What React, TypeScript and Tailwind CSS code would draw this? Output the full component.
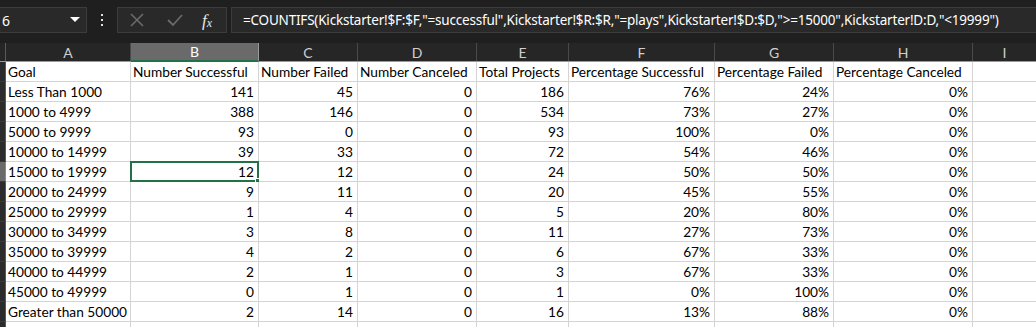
import React from "react";

const cols = [
  { l: "A", w: "w-[125px]" },
  { l: "B", w: "w-[128px]" },
  { l: "C", w: "w-[99px]" },
  { l: "D", w: "w-[119px]" },
  { l: "E", w: "w-[92px]" },
  { l: "F", w: "w-[146px]" },
  { l: "G", w: "w-[119px]" },
  { l: "H", w: "w-[139px]" },
];

const headers = [
  "Goal",
  "Number Successful",
  "Number Failed",
  "Number Canceled",
  "Total Projects",
  "Percentage Successful",
  "Percentage Failed",
  "Percentage Canceled",
];

const rows: string[][] = [
  ["Less Than 1000", "141", "45", "0", "186", "76%", "24%", "0%"],
  ["1000 to 4999", "388", "146", "0", "534", "73%", "27%", "0%"],
  ["5000 to 9999", "93", "0", "0", "93", "100%", "0%", "0%"],
  ["10000 to 14999", "39", "33", "0", "72", "54%", "46%", "0%"],
  ["15000 to 19999", "12", "12", "0", "24", "50%", "50%", "0%"],
  ["20000 to 24999", "9", "11", "0", "20", "45%", "55%", "0%"],
  ["25000 to 29999", "1", "4", "0", "5", "20%", "80%", "0%"],
  ["30000 to 34999", "3", "8", "0", "11", "27%", "73%", "0%"],
  ["35000 to 39999", "4", "2", "0", "6", "67%", "33%", "0%"],
  ["40000 to 44999", "2", "1", "0", "3", "67%", "33%", "0%"],
  ["45000 to 49999", "0", "1", "0", "1", "0%", "100%", "0%"],
  ["Greater than 50000", "2", "14", "0", "16", "13%", "88%", "0%"],
  ["", "", "", "", "", "", "", ""],
];

function RowHead({ selected }: { selected?: boolean }) {
  return (
    <div
      className={`w-[6px] shrink-0 h-full border-r border-b ${
        selected ? "bg-[#6a6a6a] border-r-[#8a8a8a]" : "bg-[#2b2b2b] border-r-[#5a5a5a]"
      } border-b-[#3a3a3a]`}
    />
  );
}

export default function App() {
  return (
    <div className="w-[1036px] h-[327px] overflow-hidden bg-[#1f1f1f] font-['Lato',sans-serif] text-[13.7px]">
      {/* formula bar */}
      <div className="h-[43px] flex pt-[7px]">
        <div className="w-[87px] shrink-0 h-[26px] bg-[#292929] border border-l-0 border-[#3c3c3c] flex items-center justify-between pl-[2px] pr-[6px] text-white font-['Noto_Sans',sans-serif] text-[14px]">
          <span>6</span>
          <svg width="10" height="6" viewBox="0 0 10 6">
            <path d="M0 0 L10 0 L5 5 Z" fill="#ffffff" />
          </svg>
        </div>
        <div className="w-[30px] shrink-0 h-[26px] flex items-center justify-center">
          <svg width="4" height="12" viewBox="0 0 4 12">
            <rect x="1" y="0" width="2" height="2" fill="#e0e0e0" />
            <rect x="1" y="5" width="2" height="2" fill="#e0e0e0" />
            <rect x="1" y="10" width="2" height="2" fill="#e0e0e0" />
          </svg>
        </div>
        <div className="w-[110px] shrink-0 h-[26px] bg-[#292929] border border-[#3c3c3c] flex items-center pl-[12px]">
          <svg width="14" height="14" viewBox="0 0 14 14" className="mr-[23px]">
            <path d="M1 1 L13 13 M13 1 L1 13" stroke="#6a6a6a" strokeWidth="1.6" />
          </svg>
          <svg width="16" height="14" viewBox="0 0 16 14" className="mr-[19px]">
            <path d="M1 7 L6 12 L15 2" stroke="#6a6a6a" strokeWidth="1.8" fill="none" />
          </svg>
          <span className="text-[#e8e8e8] italic font-['Liberation_Serif',serif] text-[17px] leading-none">
            f<span className="text-[12px] relative top-[1px]">x</span>
          </span>
        </div>
        <div className="flex-1 min-w-0 overflow-hidden ml-[4px] h-[26px] bg-[#292929] border border-r-0 border-[#3c3c3c] flex items-center pl-[11px] text-white font-['Noto_Sans',sans-serif] text-[13.5px] tracking-[-0.2px] whitespace-nowrap">
          =COUNTIFS(Kickstarter!$F:$F,"=successful",Kickstarter!$R:$R,"=plays",Kickstarter!$D:$D,"&gt;=15000",Kickstarter!D:D,"&lt;19999")
        </div>
      </div>
      {/* column headers */}
      <div className="h-[19px] flex bg-[#262626] border-b border-[#9a9a9a] text-[#cfcfcf] text-[14px]">
        <div className="w-[6px] shrink-0 border-r border-[#5a5a5a]" />
        {cols.map((c) => (
          <div
            key={c.l}
            className={`${c.w} shrink-0 flex items-center justify-center border-r ${
              c.l === "B"
                ? "bg-[#6a6a6a] border-[#9a9a9a] text-white border-b-2 border-b-[#217346] -mb-[1px]"
                : "border-[#4a4a4a]"
            }`}
          >
            {c.l}
          </div>
        ))}
        <div className="flex-1 flex items-center justify-center">I</div>
      </div>
      {/* grid */}
      {[headers, ...rows].map((r, i) => (
        <div key={i} className="h-[20px] flex">
          <RowHead selected={i === 5} />
          {r.map((v, j) => (
            <div
              key={j}
              className={`${cols[j].w} shrink-0 relative bg-white border-r border-b border-[#d4d4d4] flex items-end pb-[1px] px-[2px] text-black whitespace-nowrap overflow-visible ${
                i === 0 || j === 0 ? "justify-start" : "justify-end pr-[4px]"
              }`}
            >
              <span className="leading-[17px]">{v}</span>
              {i === 5 && j === 1 && (
                <div className="absolute -left-[1px] -top-[1px] -right-[1px] -bottom-[1px] border-2 border-[#217346]">
                  <div className="absolute -right-[4px] -bottom-[4px] w-[6px] h-[6px] bg-[#217346] border border-white" />
                </div>
              )}
            </div>
          ))}
          <div className="flex-1 bg-white border-b border-[#d4d4d4]" />
        </div>
      ))}
    </div>
  );
}
